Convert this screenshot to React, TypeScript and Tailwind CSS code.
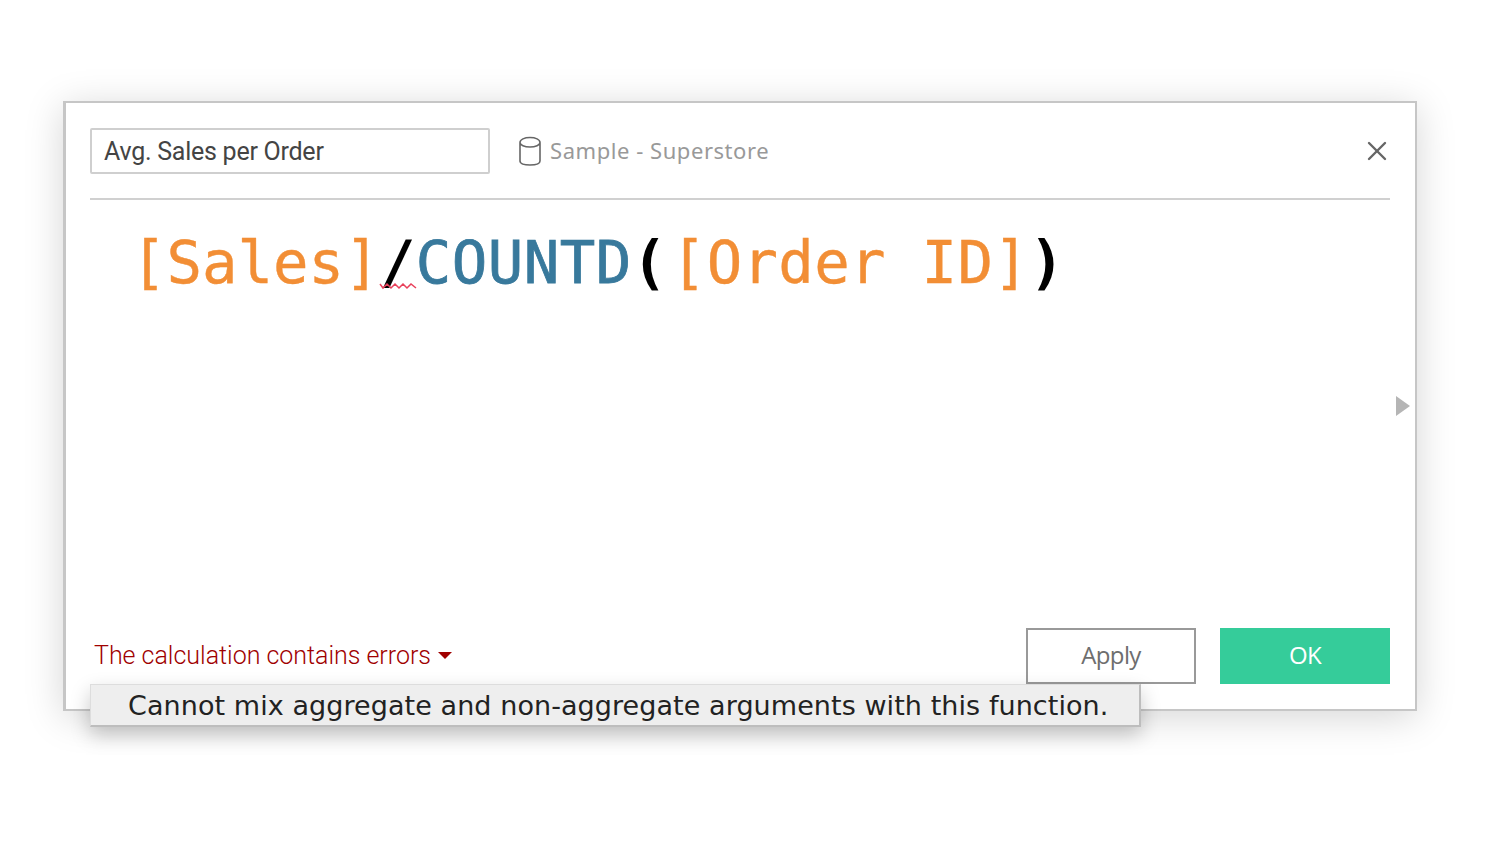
import { X } from "lucide-react";

const orange = "text-[#f28e35] [-webkit-text-stroke:0.4px_#f28e35]";

export default function App() {
  return (
    <div className="h-[846px] w-[1498px] overflow-hidden bg-white pl-[63px] pt-[101px] font-['Open_Sans',sans-serif]">
      {/* Calculation dialog */}
      <div className="relative flex h-[610px] w-[1354px] flex-col border-[2px] border-l-[3px] border-[#c6c6c6] bg-white pl-[24px] pr-[25px] shadow-[0_6px_36px_rgba(0,0,0,0.17)]">
        {/* Header */}
        <div className="flex h-[97px] items-center border-b-2 border-[#d0d0d0]">
          <input
            readOnly
            value="Avg. Sales per Order"
            className="h-[46px] w-[400px] rounded-[2px] border-2 border-[#cfcfcf] px-[12px] pt-[2px] font-['Roboto',sans-serif] text-[25px] tracking-[-0.25px] text-[#444444] outline-none"
          />
          <svg width="24" height="32" viewBox="0 0 24 32" fill="none" className="ml-[28px] text-[#666666]">
            <path
              d="M2 7.5C2 4.5 6.5 2.5 12 2.5S22 4.5 22 7.5V26C22 28.5 18 30 12 30S2 28.5 2 26V7.5ZM2 7.5C2 10 6.5 12 12 12S22 10 22 7.5"
              stroke="currentColor"
              strokeWidth="1.6"
            />
          </svg>
          <span className="ml-[8px] font-['Noto_Sans',sans-serif] text-[22px] tracking-[0.55px] text-[#999999]">
            Sample - Superstore
          </span>
          <button className="ml-auto mr-[-3px] text-[#666666]">
            <X size={32} strokeWidth={1.8} />
          </button>
        </div>

        {/* Formula */}
        <div className="relative mt-[21px] flex-1 pl-[41px] font-['DejaVu_Sans_Mono',monospace] text-[59px] leading-[84px] whitespace-pre">
          <span className={orange}>[Sales]</span>
          <span className="relative font-bold tracking-[0.5px] text-black">
            /
            <svg width="38" height="8" viewBox="0 0 38 8" fill="none" className="absolute left-[-1px] top-[54px]">
              <path d="M1 2L4 6L8 2L12 6L16 2L20 6L24 2L28 6L32 2L37 6" stroke="#e8405a" strokeWidth="1.5" />
            </svg>
          </span>
          <span className="tracking-[0.5px] text-[#38799c] [-webkit-text-stroke:0.8px_#38799c]">COUNTD</span>
          <span className="font-bold tracking-[3.5px] text-black">(</span>
          <span className={`${orange} tracking-[0.3px]`}>[Order ID]</span>
          <span className="font-bold text-black">)</span>
        </div>

        {/* Play arrow at the right edge */}
        <div className="absolute right-[5px] top-[293px] h-0 w-0 border-y-[10px] border-l-[14px] border-y-transparent border-l-[#b5b5b5]" />

        {/* Footer */}
        <div className="mb-[25px] flex items-center">
          <span className="ml-[4px] font-['Roboto',sans-serif] text-[25px] font-light tracking-[-0.02px] text-[#a00000]">
            The calculation contains errors
          </span>
          <div className="ml-[7px] mt-[-2px] h-0 w-0 border-x-[7px] border-t-[7px] border-x-transparent border-t-[#a00000]" />
          <button className="ml-auto h-[56px] w-[170px] border-2 border-[#999999] bg-white pb-[2px] font-['Open_Sans',sans-serif] text-[24px] tracking-[-0.6px] text-[#6e6e6e]">
            Apply
          </button>
          <button className="ml-[24px] h-[56px] w-[170px] bg-[#35cc9a] pb-[2px] font-['Open_Sans',sans-serif] text-[24px] tracking-[-0.6px] text-white">
            OK
          </button>
        </div>

        {/* Error tooltip */}
        <div className="absolute left-[24px] top-[581px] flex h-[43px] w-[1051px] items-center whitespace-nowrap border-t border-l border-[#dddddd] border-r-2 border-b-2 border-r-[#bdbdbd] border-b-[#bdbdbd] bg-[#eeeeee] pl-[37px] pt-[2px] font-['DejaVu_Sans',sans-serif] text-[27px] tracking-[0.07px] text-[#222222] shadow-[0_8px_20px_rgba(0,0,0,0.22)]">
          Cannot mix aggregate and non-aggregate arguments with this function.
        </div>
      </div>
    </div>
  );
}
